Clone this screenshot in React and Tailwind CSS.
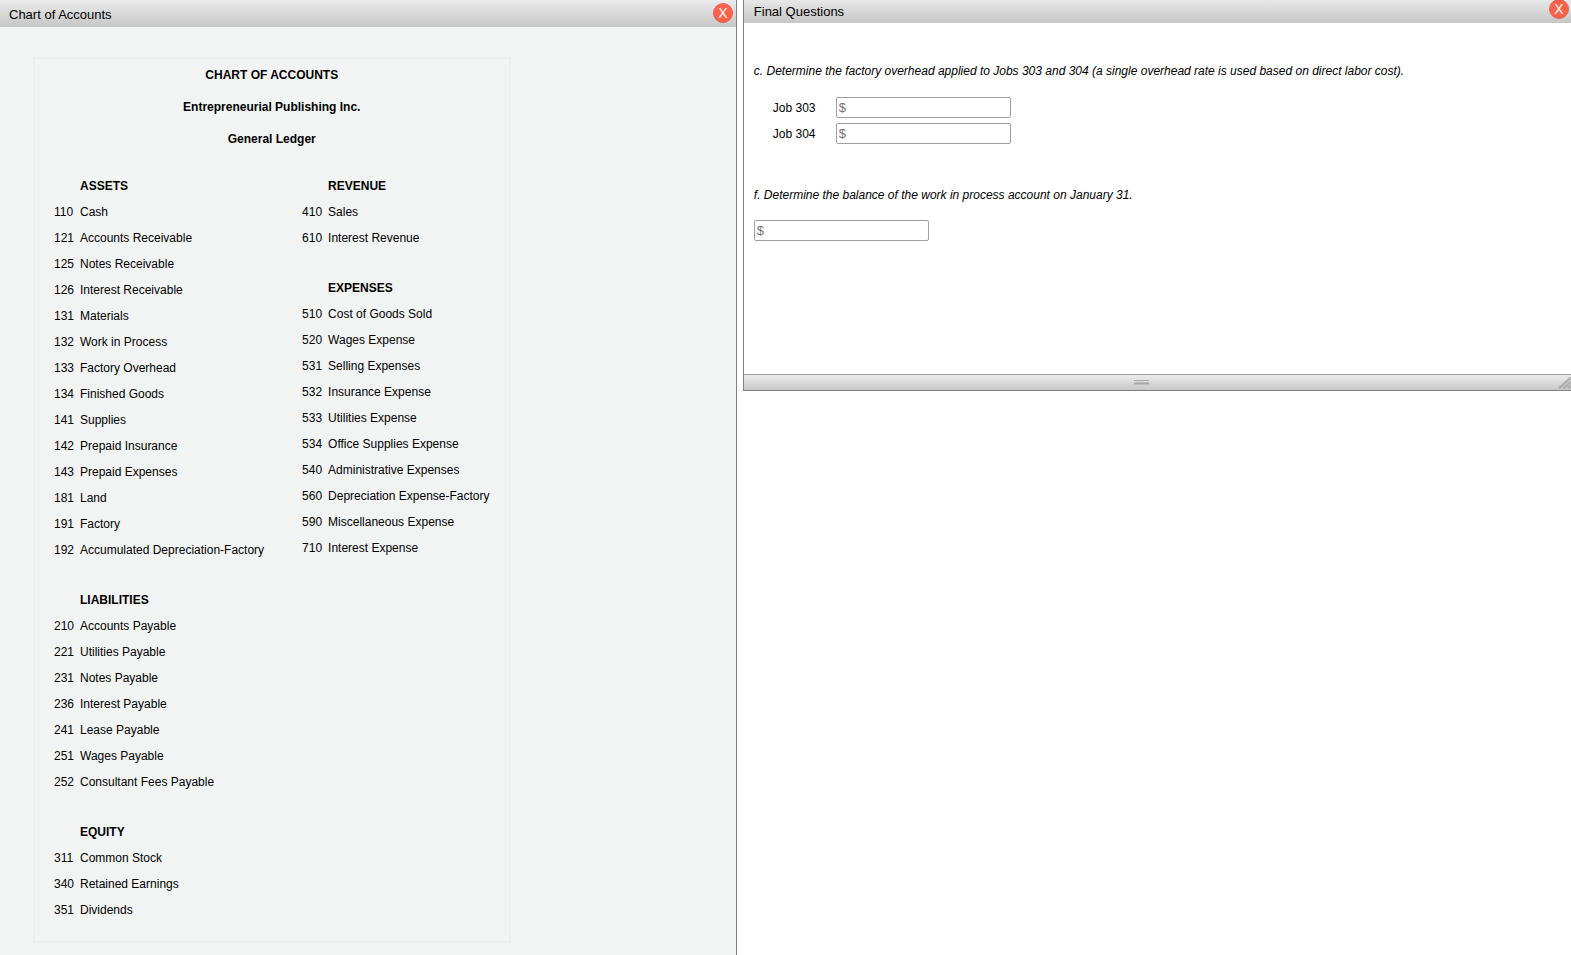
const assets = [
  ['110', 'Cash'],
  ['121', 'Accounts Receivable'],
  ['125', 'Notes Receivable'],
  ['126', 'Interest Receivable'],
  ['131', 'Materials'],
  ['132', 'Work in Process'],
  ['133', 'Factory Overhead'],
  ['134', 'Finished Goods'],
  ['141', 'Supplies'],
  ['142', 'Prepaid Insurance'],
  ['143', 'Prepaid Expenses'],
  ['181', 'Land'],
  ['191', 'Factory'],
  ['192', 'Accumulated Depreciation-Factory'],
]

const liabilities = [
  ['210', 'Accounts Payable'],
  ['221', 'Utilities Payable'],
  ['231', 'Notes Payable'],
  ['236', 'Interest Payable'],
  ['241', 'Lease Payable'],
  ['251', 'Wages Payable'],
  ['252', 'Consultant Fees Payable'],
]

const equity = [
  ['311', 'Common Stock'],
  ['340', 'Retained Earnings'],
  ['351', 'Dividends'],
]

const revenue = [
  ['410', 'Sales'],
  ['610', 'Interest Revenue'],
]

const expenses = [
  ['510', 'Cost of Goods Sold'],
  ['520', 'Wages Expense'],
  ['531', 'Selling Expenses'],
  ['532', 'Insurance Expense'],
  ['533', 'Utilities Expense'],
  ['534', 'Office Supplies Expense'],
  ['540', 'Administrative Expenses'],
  ['560', 'Depreciation Expense-Factory'],
  ['590', 'Miscellaneous Expense'],
  ['710', 'Interest Expense'],
]

function CloseButton() {
  return (
    <button
      type="button"
      aria-label="Close"
      className="flex size-5 shrink-0 items-center justify-center rounded-full border border-[#d9665a] bg-[#ff6049] pb-px text-sm leading-none text-white"
    >
      X
    </button>
  )
}

function AccountTable({ title, rows }) {
  return (
    <table className="border-collapse text-left leading-4">
      <thead>
        <tr className="h-[26px]">
          <td className="w-[26px] p-0" />
          <th scope="col" className="p-0 font-bold">{title}</th>
        </tr>
      </thead>
      <tbody>
        {rows.map(([number, name]) => (
          <tr key={number} className="h-[26px]">
            <td className="p-0">{number}</td>
            <td className="p-0 whitespace-nowrap">{name}</td>
          </tr>
        ))}
      </tbody>
    </table>
  )
}

function MoneyInput({ id, label }) {
  return (
    <input
      id={id}
      type="text"
      placeholder="$"
      aria-label={label}
      className="h-[21px] w-[175px] rounded-xs border border-[#a0a0a0] bg-white px-[2px] text-[13px] placeholder:text-[#757575]"
    />
  )
}

function ChartOfAccounts() {
  return (
    <section className="flex min-h-screen w-[46.9%] shrink-0 flex-col border-r border-[#808080] bg-[#f2f4f4]">
      <header className="flex h-[27px] items-center justify-between bg-linear-to-b from-[#ececec] to-[#c6c6c6] pr-[3px] pb-px pl-[9px]">
        <h1 className="pt-1 text-[13px] leading-4">Chart of Accounts</h1>
        <CloseButton />
      </header>
      <div className="mt-[30px] mb-3 ml-[33px] w-fit border-2 border-[#eeeff0] pt-2 pr-[19px] pb-[18px] pl-[19px]">
        <div className="space-y-4 text-center leading-4 font-bold">
          <h2>CHART OF ACCOUNTS</h2>
          <h2>Entrepreneurial Publishing Inc.</h2>
          <h2>General Ledger</h2>
        </div>
        <div className="mt-[26px] flex gap-[38px]">
          <div className="space-y-6">
            <AccountTable title="ASSETS" rows={assets} />
            <AccountTable title="LIABILITIES" rows={liabilities} />
            <AccountTable title="EQUITY" rows={equity} />
          </div>
          <div className="space-y-6">
            <AccountTable title="REVENUE" rows={revenue} />
            <AccountTable title="EXPENSES" rows={expenses} />
          </div>
        </div>
      </div>
    </section>
  )
}

function FinalQuestions() {
  return (
    <section className="ml-1.5 flex-1 self-start border-b border-l border-[#808080]">
      <header className="flex h-[23px] items-center justify-between bg-linear-to-b from-[#e8e8e8] to-[#c6c6c6] pr-[2px] pb-[5px] pl-[10px]">
        <h1 className="pt-[5px] text-[13px] leading-4">Final Questions</h1>
        <CloseButton />
      </header>
      <div className="h-[351px] px-[10px] pt-10">
        <p className="leading-4 italic">
          c. Determine the factory overhead applied to Jobs 303 and 304 (a single overhead rate is used based on direct labor cost).
        </p>
        <div className="mt-[18px] ml-[19px] space-y-[5px]">
          <div className="flex items-center">
            <label htmlFor="job303" className="w-[63px]">Job 303</label>
            <MoneyInput id="job303" />
          </div>
          <div className="flex items-center">
            <label htmlFor="job304" className="w-[63px]">Job 304</label>
            <MoneyInput id="job304" />
          </div>
        </div>
        <p className="mt-[43px] leading-4 italic">
          f. Determine the balance of the work in process account on January 31.
        </p>
        <div className="mt-[17px] flex">
          <MoneyInput id="wip" label="Work in process balance" />
        </div>
      </div>
      <footer className="relative flex h-4 justify-center border-t border-[#a0a0a0] bg-linear-to-b from-[#ececec] to-[#c8c8c8] pr-[30px]">
        <svg width="16" height="15" viewBox="0 0 16 15" aria-hidden="true">
          <path d="M0 5.5h15M0 8.5h15" stroke="#a8a8a8" />
          <path d="M0 7.5h15M0 9.5h15" stroke="#bcbcbc" />
        </svg>
        <svg width="13" height="12" viewBox="0 0 13 12" className="absolute right-0 bottom-px" aria-hidden="true">
          <path d="M1 11.5L13 0.500M5.500 11.500L13 5M10 11.500L13 9" stroke="#b0b0b0" strokeWidth="2.500" />
        </svg>
      </footer>
    </section>
  )
}

export default function App() {
  return (
    <main className="flex min-h-screen bg-white font-['Liberation_Sans',Arial,sans-serif] text-xs text-black">
      <ChartOfAccounts />
      <FinalQuestions />
    </main>
  )
}
